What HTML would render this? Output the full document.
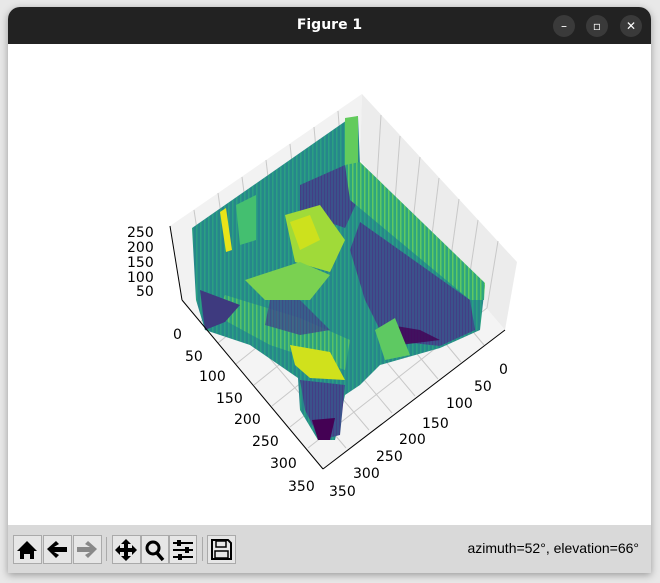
<!DOCTYPE html>
<html><head><style>
html,body{margin:0;padding:0;width:660px;height:583px;background:#e8e8e8;overflow:hidden;font-family:"DejaVu Sans","Liberation Sans",sans-serif}
.win{position:absolute;left:8px;top:7px;width:643px;height:566px;background:#fff;border-radius:12px 12px 0 0;box-shadow:0 2px 8px rgba(0,0,0,.35);overflow:hidden}
.tb{height:37px;background:#222;color:#fff;text-align:center;line-height:37px;font-weight:bold;font-size:14px}
.btn{position:absolute;top:8px;width:22px;height:22px;border-radius:50%;background:#3a3a3a;color:#fff;font-size:12px;text-align:center;line-height:22px}
.bar{position:absolute;left:0;top:518px;width:643px;height:48px;background:#d9d9d9;border-bottom:1px solid #444;z-index:1}
.st{position:absolute;right:12px;top:15px;font-size:14px;color:#000;font-family:"Liberation Sans",sans-serif}
svg{z-index:2}
</style></head><body>
<div class="win">
<div class="tb">Figure 1</div>
<div class="btn" style="left:545px">–</div>
<div class="btn" style="left:578px">▫</div>
<div class="btn" style="left:612px">✕</div>
<div class="bar"><div class="st">azimuth=52°, elevation=66°</div></div>
<svg style="position:absolute;left:-8px;top:-7px" width="660" height="583" font-family="DejaVu Sans, sans-serif" font-size="14">
<polygon points="170,226 362,94 360,160 182,300" fill="#f2f2f2"/>
<polygon points="362,94 517,262 505,330 360,160" fill="#ececec"/>
<polygon points="182,300 360,160 505,330 323,469" fill="#f4f4f4"/>
<g stroke="#c8c8c8" stroke-width="1">
<line x1="194" y1="210" x2="205" y2="282"/><line x1="218" y1="193" x2="228" y2="264"/><line x1="242" y1="177" x2="251" y2="246"/><line x1="266" y1="160" x2="274" y2="228"/><line x1="290" y1="144" x2="297" y2="211"/><line x1="314" y1="127" x2="320" y2="193"/><line x1="338" y1="111" x2="343" y2="176"/>
<line x1="381" y1="115" x2="377" y2="180"/><line x1="400" y1="136" x2="395" y2="201"/><line x1="420" y1="157" x2="413" y2="222"/><line x1="439" y1="178" x2="431" y2="243"/><line x1="459" y1="199" x2="450" y2="264"/><line x1="478" y1="220" x2="468" y2="286"/><line x1="498" y1="241" x2="487" y2="308"/>
<line x1="205" y1="282" x2="346" y2="448"/><line x1="228" y1="264" x2="369" y2="430"/><line x1="251" y1="246" x2="392" y2="413"/><line x1="274" y1="228" x2="415" y2="396"/><line x1="297" y1="211" x2="438" y2="379"/><line x1="320" y1="193" x2="461" y2="362"/><line x1="343" y1="176" x2="484" y2="345"/>
<line x1="200" y1="322" x2="377" y2="180"/><line x1="218" y1="343" x2="395" y2="201"/><line x1="236" y1="364" x2="413" y2="222"/><line x1="254" y1="385" x2="431" y2="243"/><line x1="272" y1="406" x2="450" y2="264"/><line x1="290" y1="427" x2="468" y2="286"/><line x1="308" y1="448" x2="487" y2="308"/>
</g>
<defs><pattern id="p" width="4" height="4" patternUnits="userSpaceOnUse"><rect width="4" height="4" fill="#26878a"/><rect width="1.5" height="4" fill="#2aa082"/></pattern>
<pattern id="d" width="3" height="3" patternUnits="userSpaceOnUse"><rect width="3" height="3" fill="#3b528b"/><rect width="1" height="3" fill="#433e85"/></pattern>
<pattern id="g" width="4" height="4" patternUnits="userSpaceOnUse"><rect width="4" height="4" fill="#2ea57e"/><rect width="1.5" height="4" fill="#5ec962"/></pattern></defs>
<polygon points="192,228 350,118 358,116 360,165 485,285 480,330 440,348 380,365 360,385 345,395 335,440 318,440 300,410 298,378 250,345 205,330 196,300" fill="url(#p)"/>
<polygon points="236,205 256,195 256,240 240,245" fill="#44bf70"/>
<polygon points="345,118 358,116 358,165 345,170" fill="#62cb5d"/>
<polygon points="220,212 226,208 232,250 226,252" fill="#e8e419"/>
<polygon points="300,185 345,165 360,195 345,228 300,212" fill="url(#d)"/>
<polygon points="345,165 360,162 485,283 484,300 470,300 350,200" fill="url(#g)"/>
<polygon points="360,222 470,300 475,330 440,346 385,340 365,300 350,250" fill="url(#d)"/>
<polygon points="390,325 420,330 440,340 400,345" fill="#440154" opacity=".8"/>
<polygon points="285,215 320,205 345,240 330,272 295,262" fill="#a0da39"/>
<polygon points="290,222 310,215 320,240 300,250" fill="#cde11d"/>
<polygon points="245,280 300,262 330,275 310,300 265,300" fill="#7ad151"/>
<polygon points="225,295 300,318 350,340 345,370 270,345 215,315" fill="url(#g)" opacity=".85"/>
<polygon points="200,290 240,305 225,322 205,330" fill="#3e3a7f"/>
<polygon points="270,300 300,300 330,330 300,335 265,325" fill="url(#d)" opacity=".8"/>
<polygon points="290,345 330,352 345,380 310,378 295,365" fill="#d0e11c"/>
<polygon points="300,380 345,385 340,435 320,440 305,410" fill="url(#d)"/>
<polygon points="312,420 335,418 330,440 318,440" fill="#440154"/>
<polygon points="375,330 395,318 410,355 385,360" fill="#5ec962"/>
<g stroke="#000" stroke-width="1" fill="none">
<line x1="170" y1="226" x2="182" y2="300"/>
<line x1="182" y1="300" x2="323" y2="469"/>
<line x1="323" y1="469" x2="505" y2="330"/>
</g>
<g fill="#000">
<text x="127" y="237">250</text><text x="127" y="252">200</text><text x="127" y="267">150</text><text x="127" y="282">100</text><text x="136" y="296">50</text>
<text x="173" y="339">0</text><text x="185" y="361">50</text><text x="199" y="381">100</text><text x="216" y="403">150</text><text x="234" y="424">200</text><text x="252" y="446">250</text><text x="270" y="468">300</text><text x="288" y="491">350</text>
<text x="499" y="374">0</text><text x="474" y="391">50</text><text x="446" y="408">100</text><text x="422" y="428">150</text><text x="399" y="444">200</text><text x="376" y="461">250</text><text x="353" y="478">300</text><text x="329" y="496">350</text>
</g>
<g fill="#e6e6e6" stroke="#aaa">
<rect x="13.5" y="535.5" width="28" height="28"/><rect x="43.5" y="535.5" width="28" height="28"/><rect x="73.5" y="535.5" width="28" height="28"/>
<rect x="112.5" y="535.5" width="28" height="28"/><rect x="141.5" y="535.5" width="27" height="28"/><rect x="169.5" y="535.5" width="27" height="28"/>
<rect x="207.5" y="535.5" width="28" height="28"/>
</g>
<line x1="106.5" y1="537" x2="106.5" y2="561" stroke="#aaa"/><line x1="202.5" y1="537" x2="202.5" y2="561" stroke="#aaa"/>
<path d="M17 551 L27 541 L37 551 L34 551 L34 559 L30 559 L30 554 L24 554 L24 559 L20 559 L20 551Z" fill="#000"/>
<path d="M47 549 L56 541 L59 544 L54 547 L67 547 L67 552 L54 552 L59 555 L56 558Z" fill="#000"/>
<path d="M97 549 L88 541 L85 544 L90 547 L77 547 L77 552 L90 552 L85 555 L88 558Z" fill="#888"/>
<path d="M126 539 L131 544 L128 544 L128 548 L132 548 L132 545 L137 550 L132 555 L132 552 L128 552 L128 556 L131 556 L126 561 L121 556 L124 556 L124 552 L120 552 L120 555 L115 550 L120 545 L120 548 L124 548 L124 544 L121 544Z" fill="#000"/>
<circle cx="153" cy="548" r="6" fill="none" stroke="#000" stroke-width="3"/><line x1="157" y1="553" x2="163" y2="560" stroke="#000" stroke-width="3.5"/>
<g stroke="#000" stroke-width="2"><line x1="173" y1="543" x2="193" y2="543"/><line x1="173" y1="550" x2="193" y2="550"/><line x1="173" y1="557" x2="193" y2="557"/></g>
<g fill="#000"><rect x="177" y="540" width="4" height="6"/><rect x="185" y="547" width="4" height="6"/><rect x="178" y="554" width="4" height="6"/></g>
<path d="M212 540 L228 540 L231 543 L231 559 L212 559Z" fill="none" stroke="#000" stroke-width="2"/>
<rect x="216" y="541" width="10" height="6" fill="none" stroke="#000" stroke-width="1.5"/><rect x="215" y="551" width="13" height="7" fill="none" stroke="#000" stroke-width="1.5"/>
</svg>
</div>
</body></html>
